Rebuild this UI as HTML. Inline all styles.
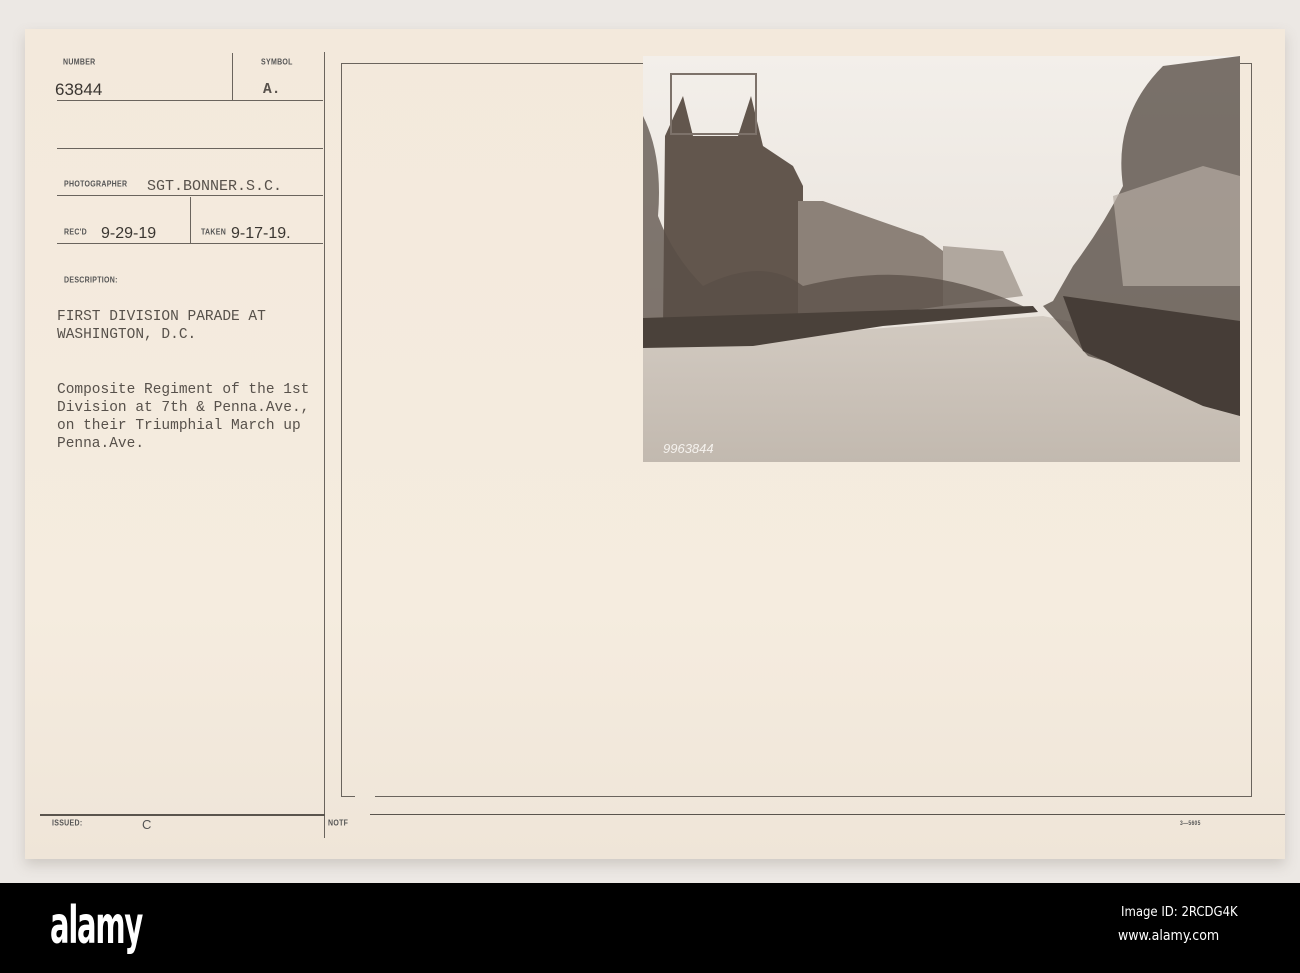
<!DOCTYPE html>
<html><head><meta charset="utf-8"><style>
body{margin:0;width:1300px;height:973px;background:#ece8e4;position:relative;overflow:hidden;font-family:"Liberation Mono",monospace;}
.card{position:absolute;left:25px;top:29px;width:1260px;height:830px;background:linear-gradient(180deg,#f3e9dc 0%,#f5ecdf 70%,#efe5d8 100%);box-shadow:0 6px 12px rgba(120,110,100,.25);}
.a{position:absolute;color:#3a3631;white-space:pre;}
.lbl{font-family:"Liberation Sans",sans-serif;font-size:7px;font-weight:bold;color:#555;letter-spacing:.3px;transform:scaleY(1.2);}
.t{font-size:14.5px;color:#57514b;}
.h{position:absolute;height:1px;background:#6a645d;}
.v{position:absolute;width:1px;background:#6a645d;}
.band{position:absolute;left:0;top:883px;width:1300px;height:90px;background:#000;}
</style></head><body>
<div class="card"></div>
<div class="h" style="left:57px;top:100px;width:266px"></div>
<div class="h" style="left:57px;top:148px;width:266px"></div>
<div class="h" style="left:57px;top:195px;width:266px"></div>
<div class="h" style="left:57px;top:243px;width:266px"></div>
<div class="v" style="left:232px;top:53px;height:47px"></div>
<div class="v" style="left:190px;top:197px;height:46px"></div>
<div class="v" style="left:324px;top:52px;height:786px"></div>
<div class="h" style="left:40px;top:814px;width:285px;height:2px;background:#5a544d"></div>
<div class="h" style="left:370px;top:814px;width:915px;background:#5a544d"></div>
<div style="position:absolute;left:341px;top:63px;width:909px;height:733px;border:1px solid #6a645d;border-bottom:none"></div>
<div class="h" style="left:341px;top:796px;width:14px"></div>
<div class="h" style="left:375px;top:796px;width:876px"></div>

<div class="a lbl" style="left:63px;top:59px">NUMBER</div>
<div class="a lbl" style="left:261px;top:59px">SYMBOL</div>
<div class="a" style="left:55px;top:80px;font-size:17px;font-family:'Liberation Sans',sans-serif">63844</div>
<div class="a t" style="left:263px;top:82px;font-weight:bold">A.</div>
<div class="a lbl" style="left:64px;top:181px">PHOTOGRAPHER</div>
<div class="a t" style="left:147px;top:178px;font-size:15px">SGT.BONNER.S.C.</div>
<div class="a lbl" style="left:64px;top:229px">REC'D</div>
<div class="a" style="left:101px;top:225px;font-size:16px;font-family:'Liberation Sans',sans-serif">9-29-19</div>
<div class="a lbl" style="left:201px;top:229px">TAKEN</div>
<div class="a" style="left:231px;top:225px;font-size:16px;font-family:'Liberation Sans',sans-serif">9-17-19.</div>
<div class="a lbl" style="left:64px;top:277px">DESCRIPTION:</div>
<div class="a t" style="left:57px;top:308px;line-height:18px">FIRST DIVISION PARADE AT
WASHINGTON, D.C.</div>
<div class="a t" style="left:57px;top:381px;line-height:18px">Composite Regiment of the 1st
Division at 7th &amp; Penna.Ave.,
on their Triumphial March up
Penna.Ave.</div>
<div class="a lbl" style="left:52px;top:820px">ISSUED:</div>
<div class="a" style="left:142px;top:817px;font-size:13px;font-family:'Liberation Sans',sans-serif;color:#555">C</div>
<div class="a lbl" style="left:328px;top:820px">NOTF</div>
<div class="a lbl" style="left:1180px;top:821px;font-size:5px">3—5605</div>

<svg style="position:absolute;left:643px;top:56px" width="597" height="406" viewBox="0 0 597 406">
<defs>
<linearGradient id="sky" x1="0" y1="0" x2="0" y2="1"><stop offset="0" stop-color="#f3efea"/><stop offset="1" stop-color="#e4ddd5"/></linearGradient>
<linearGradient id="road" x1="0" y1="0" x2="0" y2="1"><stop offset="0" stop-color="#d2cac1"/><stop offset="1" stop-color="#c2b9af"/></linearGradient>
</defs>
<rect width="597" height="406" fill="url(#sky)"/>
<path d="M0 290 L400 260 L597 300 L597 406 L0 406Z" fill="url(#road)"/>
<path d="M22 80 L40 40 L50 80 L95 80 L108 40 L120 90 L150 110 L160 130 L160 260 L20 270 Z" fill="#62564d"/>
<rect x="28" y="18" width="85" height="60" fill="none" stroke="#7d726a" stroke-width="2"/>
<path d="M155 145 L180 145 L280 180 L300 195 L300 250 L155 270Z" fill="#8c8178"/>
<path d="M300 190 L360 195 L380 240 L300 250Z" fill="#b0a79e"/>
<path d="M0 60 Q20 100 15 160 Q30 200 60 230 Q120 200 160 230 Q220 215 270 220 Q330 225 390 255 L0 290Z" fill="#5a4f47" opacity=".75"/>
<path d="M0 262 L390 250 L395 256 L240 270 L110 290 L0 292Z" fill="#4a413a"/>
<path d="M597 0 L520 10 Q470 60 480 130 Q460 170 430 210 L410 245 L400 250 L445 300 L560 335 L597 360Z" fill="#5a5049" opacity=".8"/>
<path d="M470 140 L560 110 L597 120 L597 230 L480 230Z" fill="#b5aba2" opacity=".7"/>
<path d="M420 240 L597 265 L597 360 L560 350 L440 295Z" fill="#463d37"/>
<text x="20" y="397" font-family="Liberation Sans,sans-serif" font-style="italic" font-size="13" fill="#f5f2ee">9963844</text>
</svg>

<div class="band"></div>
<div class="a" style="left:50px;top:896px;font-family:'DejaVu Sans Condensed','Liberation Sans',sans-serif;font-weight:bold;font-size:52px;color:#fff;letter-spacing:-2px;transform:scaleX(.62);transform-origin:left">alamy</div>
<div class="a" style="left:1121px;top:905px;font-family:'DejaVu Sans Condensed','Liberation Sans',sans-serif;font-size:13px;color:#fff">Image ID: 2RCDG4K</div>
<div class="a" style="left:1118px;top:928px;font-family:'DejaVu Sans Condensed','Liberation Sans',sans-serif;font-size:14px;color:#fff">www.alamy.com</div>
</body></html>
